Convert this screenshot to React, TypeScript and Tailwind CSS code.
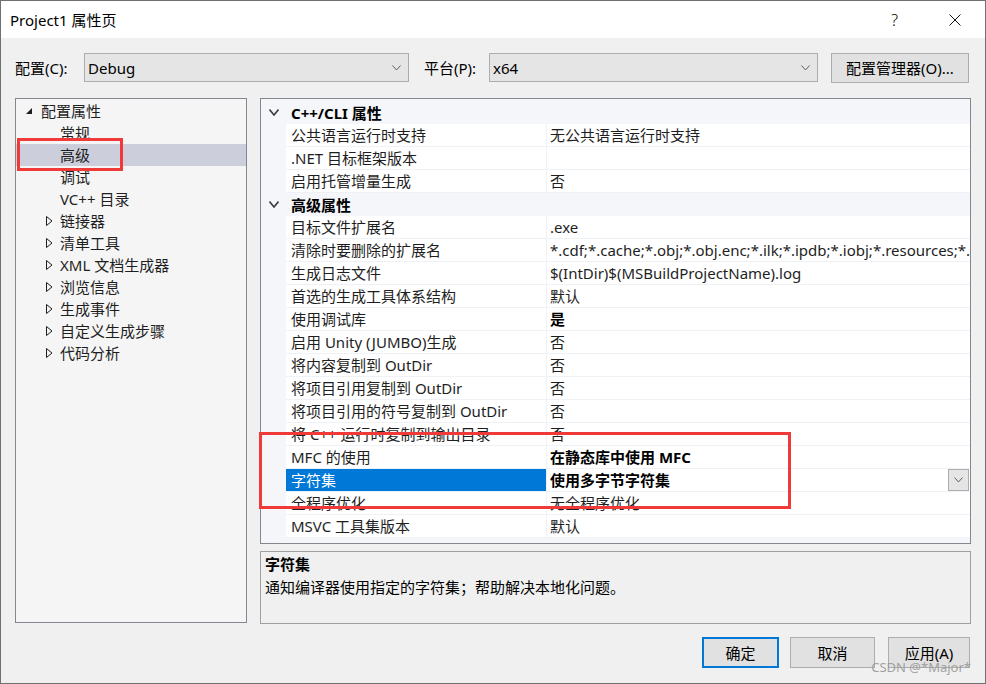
import React from "react";

const FONT = { fontFamily: '"Noto Sans", "Noto Sans CJK SC", sans-serif' };

type Row =
  | { kind: "head"; label: string }
  | { kind: "prop"; name: string; value: string; bold?: boolean; selected?: boolean };

const ROWS: Row[] = [
  { kind: "head", label: "C++/CLI 属性" },
  { kind: "prop", name: "公共语言运行时支持", value: "无公共语言运行时支持" },
  { kind: "prop", name: ".NET 目标框架版本", value: "" },
  { kind: "prop", name: "启用托管增量生成", value: "否" },
  { kind: "head", label: "高级属性" },
  { kind: "prop", name: "目标文件扩展名", value: ".exe" },
  {
    kind: "prop",
    name: "清除时要删除的扩展名",
    value: "*.cdf;*.cache;*.obj;*.obj.enc;*.ilk;*.ipdb;*.iobj;*.resources;*.tlb;*.tli;*.tlh;*.tmp",
  },
  { kind: "prop", name: "生成日志文件", value: "$(IntDir)$(MSBuildProjectName).log" },
  { kind: "prop", name: "首选的生成工具体系结构", value: "默认" },
  { kind: "prop", name: "使用调试库", value: "是", bold: true },
  { kind: "prop", name: "启用 Unity (JUMBO)生成", value: "否" },
  { kind: "prop", name: "将内容复制到 OutDir", value: "否" },
  { kind: "prop", name: "将项目引用复制到 OutDir", value: "否" },
  { kind: "prop", name: "将项目引用的符号复制到 OutDir", value: "否" },
  { kind: "prop", name: "将 C++ 运行时复制到输出目录", value: "否" },
  { kind: "prop", name: "MFC 的使用", value: "在静态库中使用 MFC", bold: true },
  { kind: "prop", name: "字符集", value: "使用多字节字符集", bold: true, selected: true },
  { kind: "prop", name: "全程序优化", value: "无全程序优化" },
  { kind: "prop", name: "MSVC 工具集版本", value: "默认" },
];

const TREE = [
  { label: "配置属性", level: 0, open: true },
  { label: "常规", level: 1 },
  { label: "高级", level: 1, selected: true },
  { label: "调试", level: 1 },
  { label: "VC++ 目录", level: 1 },
  { label: "链接器", level: 1, closed: true },
  { label: "清单工具", level: 1, closed: true },
  { label: "XML 文档生成器", level: 1, closed: true },
  { label: "浏览信息", level: 1, closed: true },
  { label: "生成事件", level: 1, closed: true },
  { label: "自定义生成步骤", level: 1, closed: true },
  { label: "代码分析", level: 1, closed: true },
];

function Chevron({ className = "", color = "#606060", w = 9, h = 5, sw = 1 }) {
  return (
    <svg width={w} height={h + 1} viewBox={`0 0 ${w} ${h + 1}`} className={className} aria-hidden>
      <path d={`M0.5 0.5L${w / 2} ${h}L${w - 0.5} 0.5`} fill="none" stroke={color} strokeWidth={sw} />
    </svg>
  );
}

function Combo({ value, width }: { value: string; width: string }) {
  return (
    <div
      className={`${width} flex h-[29px] items-center justify-between border border-[#adadad] bg-[#e5e5e5] pl-[3px] pr-[7px] text-[15px] leading-[20px] text-black`}
    >
      <span>{value}</span>
      <Chevron />
    </div>
  );
}

function Btn({ label, width, primary }: { label: string; width: string; primary?: boolean }) {
  return (
    <div
      className={`${width} flex h-[31px] shrink-0 items-center justify-center bg-[#e1e1e1] text-[15px] leading-[20px] text-black ${
        primary ? "border-2 border-[#0078d7]" : "border border-[#adadad]"
      }`}
    >
      {label}
    </div>
  );
}

function TreePanel() {
  return (
    <div className="relative h-[525px] w-[233px] border border-[#828790] bg-[#f5f5f5] pt-[1px]">
      {TREE.map((t) => (
        <div
          key={t.label}
          className={`flex h-[22px] items-center text-[15px] leading-[20px] text-[#1e1e1e] ${
            t.selected ? "bg-[#cccedb]" : ""
          }`}
        >
          {t.level === 0 ? (
            <>
              <svg width="8" height="8" viewBox="0 0 8 8" className="ml-[9px] mr-[8px]" aria-hidden>
                <path d="M7 1V7H1Z" fill="#1e1e1e" />
              </svg>
              <span>{t.label}</span>
            </>
          ) : (
            <>
              <span className="ml-[30px] flex w-[14px] items-center">
                {t.closed && (
                  <svg width="7" height="10" viewBox="0 0 7 10" aria-hidden>
                    <path d="M0.5 0.5L6 5L0.5 9.5Z" fill="none" stroke="#1e1e1e" strokeWidth="1" />
                  </svg>
                )}
              </span>
              <span>{t.label}</span>
            </>
          )}
        </div>
      ))}
      <div className="pointer-events-none absolute left-[1px] top-[39px] h-[33px] w-[106px] border-[3px] border-[#f03a3a]" />
    </div>
  );
}

function PropertyGrid() {
  return (
    <div className="h-[446px] w-[711px] overflow-hidden border border-[#828790] bg-[#f4f6f9] pt-[2px]">
      {ROWS.map((r, i) =>
        r.kind === "head" ? (
          <div key={i} className="flex h-[23px] items-center bg-[#f4f6f9]">
            <div className="flex w-[25px] justify-center">
              <Chevron w={10} h={6} sw={1.6} color="#3c3c3c" />
            </div>
            <span className="pl-[5px] text-[15px] font-bold leading-[20px] text-black">{r.label}</span>
          </div>
        ) : (
          <div key={i} className="flex h-[23px]">
            <div className="w-[25px] shrink-0" />
            <div
              className={`flex w-[261px] shrink-0 items-center whitespace-nowrap border-b border-r border-[#eef1f5] pl-[5px] text-[15px] leading-[20px] ${
                r.selected ? "bg-[#0078d7] text-white" : "bg-white text-[#1e1e1e]"
              }`}
            >
              {r.name}
            </div>
            <div
              className={`flex min-w-0 flex-1 items-center overflow-hidden whitespace-nowrap border-b border-[#eef1f5] bg-white pl-[3px] text-[15px] leading-[20px] text-[#1e1e1e] ${
                r.bold ? "font-bold text-black" : ""
              }`}
            >
              <span>{r.value}</span>
              {r.selected && (
                <div className="ml-auto mr-[1px] flex h-[22px] w-[21px] shrink-0 items-center justify-center border border-[#adadad] bg-[#e5e5e5]">
                  <Chevron />
                </div>
              )}
            </div>
          </div>
        )
      )}
    </div>
  );
}

export default function App() {
  return (
    <div className="flex h-[684px] w-[986px] flex-col overflow-hidden border border-[#707070] bg-white" style={FONT}>
      <div className="flex h-[37px] shrink-0 items-center bg-white pl-[9px] text-[15px] leading-[20px] text-black">
        <span>Project1 属性页</span>
        <span className="ml-auto mr-[51px] text-[16px] font-light">?</span>
        <svg width="12" height="12" viewBox="0 0 12 12" className="mr-[24px]" aria-hidden>
          <path d="M0.5 0.5L11.5 11.5M11.5 0.5L0.5 11.5" stroke="#111" strokeWidth="1" />
        </svg>
      </div>

      <div className="relative flex flex-1 flex-col bg-[#f0f0f0] px-[14px] pt-[14px]">
        <div className="flex h-[31px] items-center text-[15px] leading-[20px] text-black">
          <span className="w-[69px]">配置(C):</span>
          <Combo value="Debug" width="w-[325px]" />
          <span className="ml-[15px] w-[65px]">平台(P):</span>
          <Combo value="x64" width="w-[329px]" />
          <div className="ml-[13px] flex h-[30px] w-[138px] items-center justify-center border border-[#adadad] bg-[#e1e1e1]">
            配置管理器(O)...
          </div>
        </div>

        <div className="mt-[15px] flex gap-[13px]">
          <TreePanel />
          <div className="relative flex flex-col gap-[7px]">
            <PropertyGrid />
            <div className="h-[73px] w-[711px] border border-[#a0a0a0] bg-[#f0f0f0] pl-[4px] pt-[1px] text-[15px] leading-[23px] text-black">
              <div className="font-bold">字符集</div>
              <div>通知编译器使用指定的字符集；帮助解决本地化问题。</div>
            </div>
            <div className="pointer-events-none absolute left-[-1px] top-[334px] h-[77px] w-[532px] border-[3px] border-[#f03a3a]" />
          </div>
        </div>

        <div className="mt-[13px] flex justify-end pr-[1px]">
          <Btn label="确定" width="w-[77px]" primary />
          <div className="w-[11px] shrink-0" />
          <Btn label="取消" width="w-[85px]" />
          <div className="w-[13px] shrink-0" />
          <Btn label="应用(A)" width="w-[82px]" />
        </div>

        <div className="pointer-events-none absolute bottom-[8px] right-[14px] text-[13px] leading-[16px] text-[#9a9a9a] opacity-90">
          CSDN @*Major*
        </div>
      </div>
    </div>
  );
}
